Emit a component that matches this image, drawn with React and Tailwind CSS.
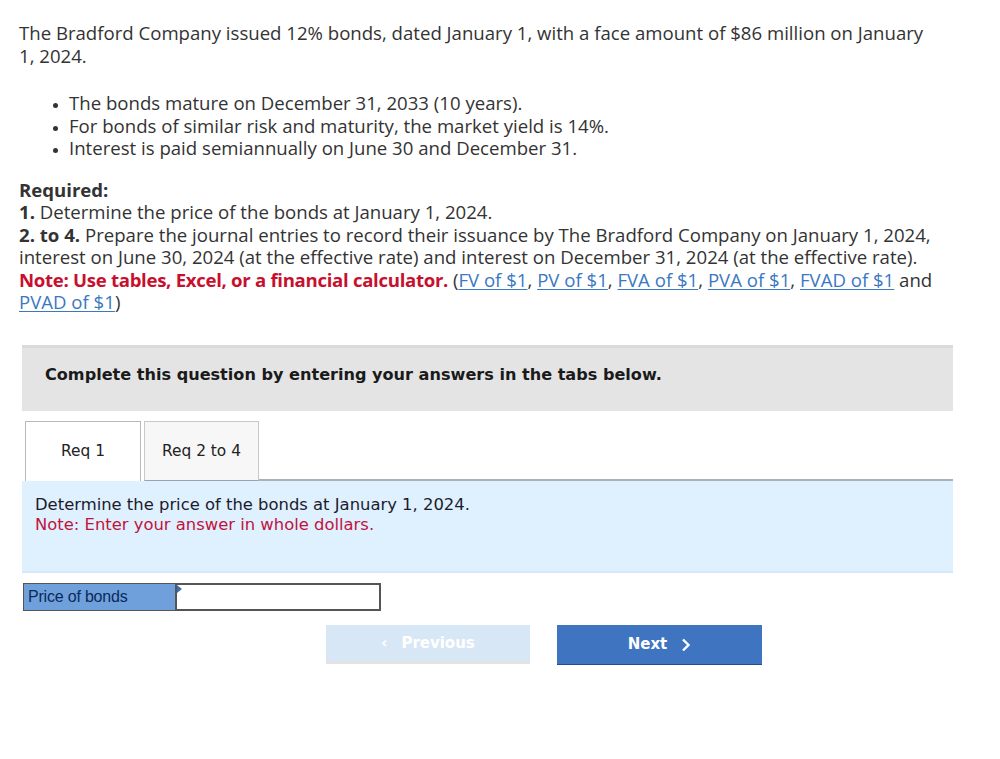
import React from "react";

const body = { fontFamily: "'Open Sans', 'Liberation Sans', sans-serif" };
const verdana = { fontFamily: "'DejaVu Sans', Verdana, sans-serif" };

const links = ["FV of $1", "PV of $1", "FVA of $1", "PVA of $1", "FVAD of $1"];

function Link({ children }) {
  return <a href="#" className="text-[#3b78c2] underline underline-offset-2 decoration-1">{children}</a>;
}

export default function App() {
  return (
    <div className="w-[1000px] h-[759px] bg-white px-[19px] pt-[21px] text-[#333]" style={body}>
      <div className="w-[920px] text-[18.6px] leading-[23px]">
        <p>The Bradford Company issued 12% bonds, dated January 1, with a face amount of $86 million on January 1, 2024.</p>
        <ul className="list-disc pl-[50px] mt-[25px] leading-[22.5px] marker:text-[13px]">
          <li>The bonds mature on December 31, 2033 (10 years).</li>
          <li>For bonds of similar risk and maturity, the market yield is 14%.</li>
          <li>Interest is paid semiannually on June 30 and December 31.</li>
        </ul>
        <div className="mt-[19px] leading-[22.6px]">
          <p className="font-bold">Required:</p>
          <p><b>1.</b> Determine the price of the bonds at January 1, 2024.</p>
          <p>
            <b>2. to 4.</b> Prepare the journal entries to record their issuance by The Bradford Company on January 1, 2024, interest on June 30, 2024 (at the effective rate) and interest on December 31, 2024 (at the effective rate).{" "}
            <b className="text-[#c8102e] tracking-[-0.3px]">Note: Use tables, Excel, or a financial calculator.</b>{" "}
            (
            {links.map((l, i) => (
              <span key={l}>
                <Link>{l}</Link>
                {i < links.length - 1 ? ", " : " "}
              </span>
            ))}
            and <Link>PVAD of $1</Link>)
          </p>
        </div>
      </div>

      <div style={verdana}>
        <div className="ml-[3px] mt-[31px] w-[931px] h-[66px] bg-[#e4e4e4] border-t-[3px] border-[#dadada] pt-[15px] pl-[23px]">
          <span className="font-bold text-[16.1px] text-[#1a1a1a]">Complete this question by entering your answers in the tabs below.</span>
        </div>

        <div className="ml-[3px] mt-[10px] w-[931px] flex items-end">
          <div className="ml-[3px] w-[116px] h-[60px] bg-white border border-b-0 border-[#b9b9b9] flex items-center justify-center text-[15.4px] text-[#222]">Req 1</div>
          <div className="ml-[3px] w-[115px] h-[60px] bg-[#f7f7f7] border border-[#c8c8c8] border-b-[#9aa3ad] flex items-center justify-center text-[15.4px] text-[#222]">Req 2 to 4</div>
          <div className="flex-1 border-b-2 border-[#a8b0b8]"></div>
        </div>

        <div className="ml-[3px] w-[931px] h-[92px] bg-[#dff0fe] border-b-2 border-[#d3e8fb] pl-[13px] pt-[14px] text-[16.4px] leading-[20px]">
          <p className="text-[#1c1c2c]">Determine the price of the bonds at January 1, 2024.</p>
          <p className="text-[#c0143c]">Note: Enter your answer in whole dollars.</p>
        </div>

        <div className="ml-[4px] mt-[10px] flex h-[28px]">
          <div className="w-[152px] h-full bg-[#6fa0dc] border border-r-0 border-[#555] flex items-center pl-[4px] text-[16px] text-[#0a2a5a] tracking-[-0.2px]" style={{ fontFamily: "'Liberation Sans', Arial, sans-serif" }}>Price of bonds</div>
          <div className="relative w-[206px] h-full bg-white border-2 border-[#555]">
            <span className="absolute left-0 top-0 w-0 h-0 border-t-[4px] border-b-[4px] border-l-[5px] border-t-transparent border-b-transparent border-l-[#3b6fb0]"></span>
          </div>
        </div>

        <div className="mt-[14px] flex pl-[307px] gap-[27px]">
          <button className="w-[204px] h-[39px] bg-[#d8e7f6] text-white font-bold text-[15px] flex items-center justify-center gap-[14px] border-b-[3px] border-[#e3e3e3]">
            <span>‹</span><span>Previous</span>
          </button>
          <button className="w-[205px] h-[39px] bg-[#3f74c1] text-white font-bold text-[15px] flex items-center justify-center gap-[14px] shadow-[0_1px_0_#1f4f90]">
            <span>Next</span>
            <svg width="10" height="14" viewBox="0 0 10 14"><path d="M2 1.5 L7.5 7 L2 12.5" stroke="white" strokeWidth="2.4" fill="none" /></svg>
          </button>
        </div>
      </div>
    </div>
  );
}
